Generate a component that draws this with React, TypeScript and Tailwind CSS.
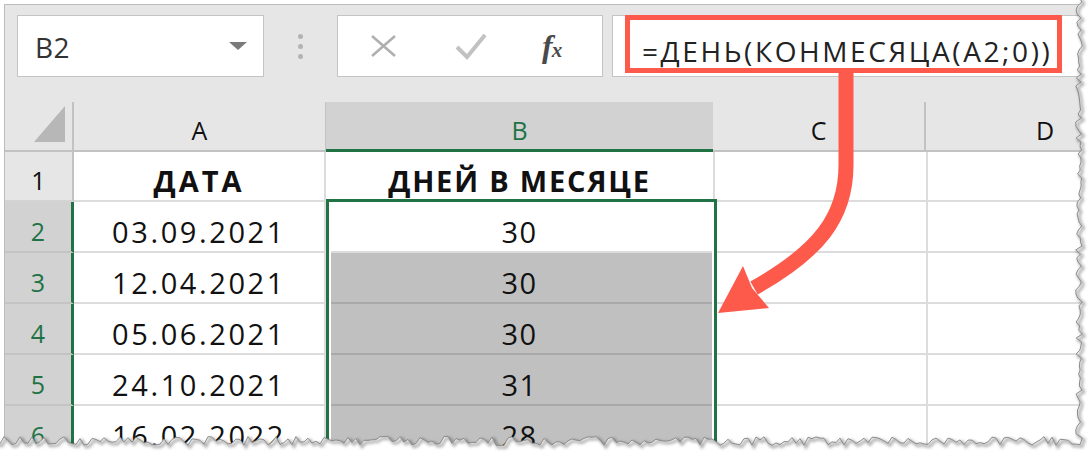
import React from "react";

const GREEN = "#217346";
const RED = "#fe5a4c";

const rows = [
  { n: 1, a: "ДАТА", b: "ДНЕЙ В МЕСЯЦЕ", head: true },
  { n: 2, a: "03.09.2021", b: "30" },
  { n: 3, a: "12.04.2021", b: "30" },
  { n: 4, a: "05.06.2021", b: "30" },
  { n: 5, a: "24.10.2021", b: "31" },
  { n: 6, a: "16.02.2022", b: "28" },
];

// jagged line for the torn paper edge on the right and bottom
function tornPoints() {
  let s = 11;
  const rnd = () => {
    s = (s * 9301 + 49297) % 233280;
    return s / 233280;
  };
  const pts: string[] = [];
  for (let y = -2; y <= 438; y += 4) pts.push(`${(1079 + (rnd() - 0.5) * 7).toFixed(1)} ${y}`);
  for (let x = 1080; x >= -4; x -= 4) pts.push(`${x} ${(441 + (rnd() - 0.5) * 9).toFixed(1)}`);
  return pts;
}

function TornEdge() {
  const pts = tornPoints();
  const line = "M " + pts.join(" L ");
  const fill = line + " L -4 470 L 1110 470 L 1110 -2 Z";
  return (
    <svg className="absolute left-0 top-0 pointer-events-none" width="1090" height="452">
      <defs>
        <filter id="blur" x="-5%" y="-5%" width="110%" height="110%">
          <feGaussianBlur stdDeviation="1.4" />
        </filter>
      </defs>
      <path d={fill} fill="#ffffff" />
      <path d={line} fill="none" stroke="#000" strokeOpacity="0.35" strokeWidth="2.5" transform="translate(2 2)" filter="url(#blur)" />
      <path d={line} fill="none" stroke="#8c8c8c" strokeWidth="1" />
    </svg>
  );
}

function Arrow() {
  return (
    <svg className="absolute left-0 top-0 pointer-events-none" width="1090" height="452">
      <path
        d="M 846 72 L 846 165 C 846 218 818 252 754 288"
        fill="none"
        stroke={RED}
        strokeWidth="15"
      />
      <polygon points="718,313 743,266 752,288 769,308" fill={RED} />
    </svg>
  );
}

export default function App() {
  const cell = "flex items-center justify-center pt-[9px] leading-none";
  return (
    <div className="relative w-[1090px] h-[452px] overflow-hidden bg-white font-['Open_Sans','Noto_Sans',sans-serif] text-[#111]">
      <div className="pl-[4px] pt-[4px]">
        <div className="w-[1200px] border-l border-t border-[#bcbcbc]">
          {/* toolbar */}
          <div className="h-[97px] bg-[#e6e6e6] flex items-start pt-[10px] pl-[12px]">
            <div className="w-[247px] h-[62px] bg-white border border-[#c4c4c4] flex items-center justify-between pl-[17px] pr-[16px]">
              <span className="text-[28px] leading-none pt-[2px] tracking-[0.5px] text-[#333]">B2</span>
              <svg width="18" height="10" viewBox="0 0 18 10">
                <polygon points="0,1 18,1 9,9" fill="#7a7a7a" />
              </svg>
            </div>
            <div className="w-[73px] h-[62px] flex flex-col items-center justify-center gap-[5px]">
              <span className="w-[5px] h-[5px] rounded-full bg-[#b3b3b3]" />
              <span className="w-[5px] h-[5px] rounded-full bg-[#b3b3b3]" />
              <span className="w-[5px] h-[5px] rounded-full bg-[#b3b3b3]" />
            </div>
            <div className="w-[266px] h-[62px] bg-white border border-[#c4c4c4] flex items-center">
              <svg className="ml-[32px]" width="27" height="24" viewBox="0 0 27 24">
                <path d="M2 2 L25 22 M25 2 L2 22" stroke="#b0b0b0" strokeWidth="2.6" fill="none" />
              </svg>
              <svg className="ml-[58px]" width="32" height="28" viewBox="0 0 32 28">
                <path d="M2 15 L12 25 L30 3" stroke="#c2c2c2" strokeWidth="4" fill="none" />
              </svg>
              <span className="ml-[55px] flex items-end text-[#4a4a4a] font-['Liberation_Serif',serif] italic font-bold leading-none">
                <span className="text-[32px]">f</span>
                <span className="text-[21px] -ml-[1px] pb-[1px]">x</span>
              </span>
            </div>
            <div className="ml-[9px] flex-1 h-[62px] bg-white border border-[#c4c4c4] flex items-center pl-[29px] pt-[10px]">
              <span className="text-[28px] leading-none tracking-[2.6px] font-medium text-[#222]">=ДЕНЬ(КОНМЕСЯЦА(A2;0))</span>
            </div>
          </div>

          {/* column headers */}
          <div className="flex h-[50px] text-[25px] font-medium">
            <div className="w-[69px] shrink-0 bg-[#e6e6e6] border-r-2 border-b-2 border-[#c2c2c2] relative">
              <svg className="absolute left-[29px] top-[3px]" width="32" height="38" viewBox="0 0 32 38">
                <polygon points="0,37 31,1 31,37" fill="#b7b7b7" />
              </svg>
            </div>
            <div className={`${cell} w-[252px] shrink-0 bg-[#e6e6e6] border-r border-b-2 border-[#c2c2c2] pt-[8px]`}>A</div>
            <div className={`${cell} w-[387px] shrink-0 bg-[#d2d2d2] border-b-[3px] border-[#217346] text-[#217346] pt-[8px]`}>B</div>
            <div className={`${cell} w-[213px] shrink-0 bg-[#e6e6e6] border-r-2 border-b-2 border-[#c2c2c2] pt-[8px]`}>C</div>
            <div className={`${cell} w-[240px] shrink-0 bg-[#e6e6e6] border-r-2 border-b-2 border-[#c2c2c2] pt-[8px]`}>D</div>
          </div>

          {/* rows */}
          {rows.map((r) => (
            <div key={r.n} className={`flex ${r.head ? "h-[50px]" : "h-[51px]"}`}>
              <div
                className={`${cell} w-[69px] shrink-0 text-[25px] font-medium border-b-2 ${
                  r.head
                    ? "bg-[#e6e6e6] border-r-2 border-r-[#c2c2c2] border-b-[#d4d4d4]"
                    : "bg-[#d2d2d2] text-[#217346] border-r-[3px] border-r-[#217346] border-b-[#c4c4c4]"
                }`}
              >
                {r.n}
              </div>
              <div
                className={`${cell} w-[252px] shrink-0 text-[29px] border-r-2 border-b-2 border-[#dcdcdc] ${
                  r.head ? "font-bold tracking-[3px]" : "font-medium tracking-[2.6px]"
                }`}
              >
                {r.a}
              </div>
              <div
                className={`${cell} w-[389px] shrink-0 text-[29px] border-r-2 border-b-2 ${
                  r.head
                    ? "font-bold tracking-[1.8px] border-[#dcdcdc]"
                    : r.n === 2
                    ? "font-medium border-[#dcdcdc] tracking-[1.5px]"
                    : "font-medium bg-[#c0c0c0] border-[#a9a9a9] tracking-[1.5px]"
                }`}
              >
                {r.b}
              </div>
              <div className="w-[213px] shrink-0 border-r-2 border-b-2 border-[#dcdcdc]" />
              <div className="w-[240px] shrink-0 border-r-2 border-b-2 border-[#dcdcdc]" />
            </div>
          ))}
        </div>
      </div>

      {/* selection B2:B6 */}
      <div className="absolute left-[326px] top-[199px] w-[391px] h-[300px] border-[3px] border-[#217346] shadow-[inset_0_0_0_2px_#ffffff]" />

      {/* annotation */}
      <div className="absolute left-[625px] top-[15px] w-[437px] h-[58px] border-[5px] border-[#fe5a4c]" />
      <Arrow />
      <TornEdge />
    </div>
  );
}
